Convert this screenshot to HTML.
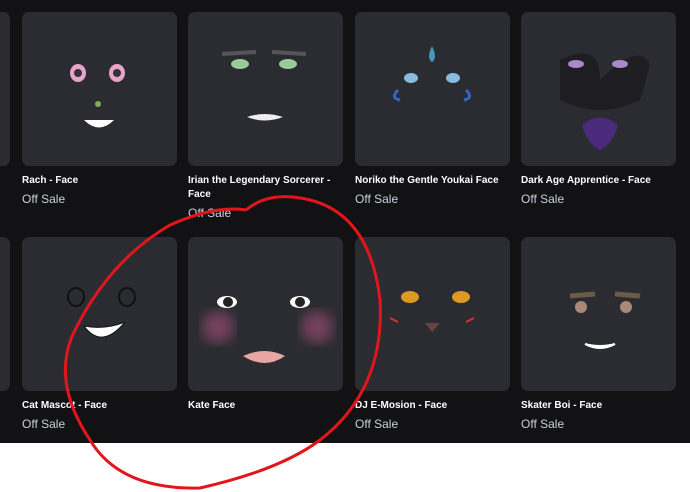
<!DOCTYPE html><html><head><style>
body{margin:0;width:690px;height:492px;background:#fff;position:relative;overflow:hidden;font-family:"Liberation Sans",sans-serif}
#bg{position:absolute;left:0;top:0;width:690px;height:443px;background:#121215}
.t{position:absolute;width:155px;height:154px;background:#2b2c31;border-radius:7px}
.n{position:absolute;color:#fff;font-size:10px;font-weight:bold;line-height:14px;width:155px}
.p{position:absolute;color:#c8d0dc;font-size:12px;}
svg{position:absolute;left:0;top:0}
</style></head><body><div id="bg"></div>
<div class="t" style="left:-145px;top:12px"></div><div class="t" style="left:-145px;top:237px"></div>
<div class="t" style="left:22px;top:12px"></div><div class="t" style="left:188px;top:12px"></div><div class="t" style="left:355px;top:12px"></div><div class="t" style="left:521px;top:12px"></div>
<div class="t" style="left:22px;top:237px"></div><div class="t" style="left:188px;top:237px"></div><div class="t" style="left:355px;top:237px"></div><div class="t" style="left:521px;top:237px"></div>
<div class="n" style="left:22px;top:174px">Rach - Face</div><div class="p" style="left:22px;top:192px">Off Sale</div>
<div class="n" style="left:188px;top:174px">Irian the Legendary Sorcerer - Face</div><div class="p" style="left:188px;top:206px">Off Sale</div>
<div class="n" style="left:355px;top:174px">Noriko the Gentle Youkai Face</div><div class="p" style="left:355px;top:192px">Off Sale</div>
<div class="n" style="left:521px;top:174px">Dark Age Apprentice - Face</div><div class="p" style="left:521px;top:192px">Off Sale</div>
<div class="n" style="left:22px;top:399px">Cat Mascot - Face</div><div class="p" style="left:22px;top:417px">Off Sale</div>
<div class="n" style="left:188px;top:399px">Kate Face</div>
<div class="n" style="left:355px;top:399px">DJ E-Mosion - Face</div><div class="p" style="left:355px;top:417px">Off Sale</div>
<div class="n" style="left:521px;top:399px">Skater Boi - Face</div><div class="p" style="left:521px;top:417px">Off Sale</div>
<svg width="690" height="492">
<defs><filter id="b"><feGaussianBlur stdDeviation="6"/></filter></defs>
<ellipse cx="78" cy="73" rx="8" ry="9" fill="#e7a3c9"/><ellipse cx="117" cy="73" rx="8" ry="9" fill="#e7a3c9"/>
<circle cx="78" cy="73" r="4" fill="#333"/><circle cx="117" cy="73" r="4" fill="#333"/>
<path d="M84 120 Q99 135 114 120 Z" fill="#fff"/><circle cx="98" cy="104" r="3" fill="#8a5"/>
<ellipse cx="240" cy="64" rx="9" ry="5" fill="#9c9"/><ellipse cx="288" cy="64" rx="9" ry="5" fill="#9c9"/>
<path d="M222 54 L256 52 M272 52 L306 54" stroke="#555" stroke-width="4"/>
<path d="M247 117 Q265 111 283 117 Q265 124 247 117Z" fill="#eee"/>
<path d="M432 46 Q426 58 432 62 Q438 58 432 46Z" fill="#49b"/>
<ellipse cx="411" cy="78" rx="7" ry="5" fill="#8bd"/><ellipse cx="453" cy="78" rx="7" ry="5" fill="#8bd"/>
<path d="M398 90 Q390 98 400 100 M466 90 Q474 98 464 100" stroke="#36c" stroke-width="3" fill="none"/>
<path d="M560 60 Q600 40 600 80 Q640 40 650 65 L640 100 Q600 120 560 100Z" fill="#1d1d22"/>
<ellipse cx="576" cy="64" rx="8" ry="4" fill="#a8c"/><ellipse cx="620" cy="64" rx="8" ry="4" fill="#a8c"/>
<path d="M582 125 Q600 110 618 125 Q612 145 600 150 Q588 145 582 125Z" fill="#4a2a7a"/>
<ellipse cx="76" cy="297" rx="8" ry="9" fill="none" stroke="#111" stroke-width="2"/><ellipse cx="127" cy="297" rx="8" ry="9" fill="none" stroke="#111" stroke-width="2"/>
<path d="M84 326 Q102 350 125 322 Q105 330 84 326Z" fill="#fff" stroke="#111"/>
<circle cx="218" cy="327" r="16" fill="#b58" opacity=".5" filter="url(#b)"/><circle cx="317" cy="327" r="16" fill="#b58" opacity=".5" filter="url(#b)"/>
<ellipse cx="227" cy="302" rx="10" ry="6" fill="#fff"/><circle cx="228" cy="302" r="5" fill="#222"/>
<ellipse cx="300" cy="302" rx="10" ry="6" fill="#fff"/><circle cx="300" cy="302" r="5" fill="#222"/>
<path d="M243 356 Q265 346 285 356 Q265 370 243 356Z" fill="#e9a4a4"/>
<ellipse cx="410" cy="297" rx="9" ry="6" fill="#d92"/><ellipse cx="461" cy="297" rx="9" ry="6" fill="#d92"/>
<path d="M425 323 L440 323 L432 332Z" fill="#644"/><path d="M390 318 L398 322 M474 318 L466 322" stroke="#c33" stroke-width="2"/>
<path d="M570 296 L595 294 M615 294 L640 296" stroke="#6a5a4a" stroke-width="5"/>
<circle cx="581" cy="307" r="6" fill="#a87"/><circle cx="626" cy="307" r="6" fill="#a87"/>
<path d="M585 344 Q600 352 615 344 Q600 348 585 344Z" fill="#fff" stroke="#fff" stroke-width="2"/>
<path d="M246 210 Q270 190 310 200 Q370 215 380 300 Q385 390 320 440 Q280 470 200 488 Q120 490 90 440 Q50 380 75 330 Q110 260 170 225 Q215 205 246 210" fill="none" stroke="#e0161b" stroke-width="3"/>
</svg>
</body></html>
